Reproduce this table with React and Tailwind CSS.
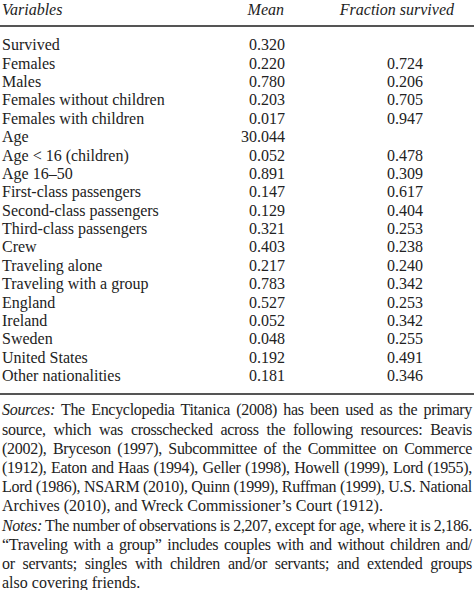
import React from 'react';

const rows = [
  ['Survived', '0.320', ''],
  ['Females', '0.220', '0.724'],
  ['Males', '0.780', '0.206'],
  ['Females without children', '0.203', '0.705'],
  ['Females with children', '0.017', '0.947'],
  ['Age', '30.044', ''],
  ['Age < 16 (children)', '0.052', '0.478'],
  ['Age 16–50', '0.891', '0.309'],
  ['First-class passengers', '0.147', '0.617'],
  ['Second-class passengers', '0.129', '0.404'],
  ['Third-class passengers', '0.321', '0.253'],
  ['Crew', '0.403', '0.238'],
  ['Traveling alone', '0.217', '0.240'],
  ['Traveling with a group', '0.783', '0.342'],
  ['England', '0.527', '0.253'],
  ['Ireland', '0.052', '0.342'],
  ['Sweden', '0.048', '0.255'],
  ['United States', '0.192', '0.491'],
  ['Other nationalities', '0.181', '0.346'],
];

// footnote lines, broken as in the printed table
const notes = [
  [<><i>Sources:</i> The Encyclopedia Titanica (2008) has been used as the primary</>, true],
  ['source, which was crosschecked across the following resources: Beavis', true],
  ['(2002), Bryceson (1997), Subcommittee of the Committee on Commerce', true],
  ['(1912), Eaton and Haas (1994), Geller (1998), Howell (1999), Lord (1955),', true],
  ['Lord (1986), NSARM (2010), Quinn (1999), Ruffman (1999), U.S. National', true],
  ['Archives (2010), and Wreck Commissioner’s Court (1912).', false],
  [<><i>Notes:</i> The number of observations is 2,207, except for age, where it is 2,186.</>, true],
  ['“Traveling with a group” includes couples with and without children and/', true],
  ['or servants; singles with children and/or servants; and extended groups', true],
  ['also covering friends.', false],
];

export default function App() {
  return (
    <div className="w-[474px] h-[590px] overflow-hidden bg-white text-[#222] font-['Liberation_Serif',serif] text-[16px]">
      {/* header */}
      <div className="flex h-[25px] items-center px-[2px] italic leading-none pb-[6px]">
        <div className="w-[218px]">Variables</div>
        <div className="w-[64px] text-right">Mean</div>
        <div className="w-[170px] text-right">Fraction survived</div>
      </div>
      <div className="h-[2px] bg-[#555]" />
      <div className="pt-[9px] pb-[8px]">
        {rows.map(([label, mean, frac]) => (
          <div key={label} className="flex h-[18.4px] items-center px-[2px] leading-none">
            <div className="w-[219px]">{label}</div>
            <div className="w-[64px] text-right">{mean}</div>
            <div className="w-[138px] text-right">{frac}</div>
          </div>
        ))}
      </div>
      <div className="h-[2px] bg-[#555]" />
      <div className="px-[2px] pt-[5px] leading-[19.2px]">
        {notes.map(([line, full], i) => (
          <div
            key={i}
            className={
              full
                ? 'whitespace-nowrap text-justify [text-align-last:justify] [word-spacing:-2px] tracking-[-0.3px]'
                : 'whitespace-nowrap'
            }
          >
            {line}
          </div>
        ))}
      </div>
    </div>
  );
}
